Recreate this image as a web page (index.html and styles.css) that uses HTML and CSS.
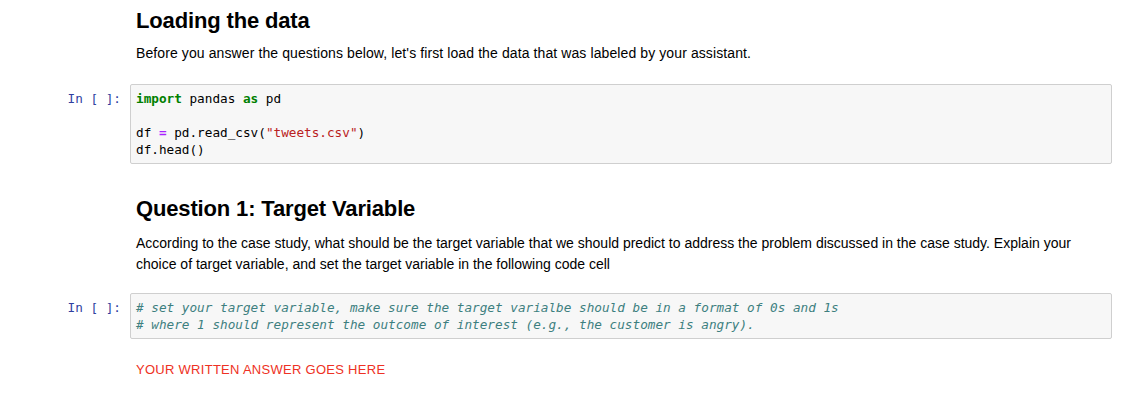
FILE: index.html
```html
<!DOCTYPE html>
<html>
<head>
<meta charset="utf-8">
<link rel="stylesheet" href="styles.css">
</head>
<body>
<div class="notebook">
  <div class="cell md-cell first">
    <div class="prompt"></div>
    <div class="md">
      <h2 class="h h-l">Loading the data</h2>
      <p class="para p1">Before you answer the questions below, let's first load the data that was labeled by your assistant.</p>
    </div>
  </div>

  <div class="cell code-cell c1">
    <div class="prompt in">In&nbsp;[&nbsp;]:</div>
    <div class="input"><pre class="code"><span class="kw">import</span> pandas <span class="kw">as</span> pd

df <span class="op">=</span> pd.read_csv(<span class="str">"tweets.csv"</span>)
df.head()</pre></div>
  </div>

  <div class="cell md-cell">
    <div class="prompt"></div>
    <div class="md">
      <h2 class="h h-q">Question 1: Target Variable</h2>
      <p class="para p2">According to the case study, what should be the target variable that we should predict to address the problem discussed in the case study. Explain your choice of target variable, and set the target variable in the following code cell</p>
    </div>
  </div>

  <div class="cell code-cell c2">
    <div class="prompt in">In&nbsp;[&nbsp;]:</div>
    <div class="input"><pre class="code"><span class="cm"># set your target variable, make sure the target varialbe should be in a format of 0s and 1s</span>
<span class="cm"># where 1 should represent the outcome of interest (e.g., the customer is angry).</span></pre></div>
  </div>

  <div class="cell md-cell">
    <div class="prompt"></div>
    <div class="md">
      <p class="para answer">YOUR WRITTEN ANSWER GOES HERE</p>
    </div>
  </div>
</div>
</body>
</html>
```

FILE: styles.css
```css
html, body {
  margin: 0;
  padding: 0;
  background: #ffffff;
}
body {
  font-family: "Liberation Sans", Arial, Helvetica, sans-serif;
  color: #000;
}
.notebook {
  padding: 6px 20px 0 0;
  display: flex;
  flex-direction: column;
}
.cell {
  display: flex;
  flex-direction: row;
  align-items: flex-start;
}
.prompt {
  flex: 0 0 130px;
  width: 130px;
  box-sizing: border-box;
  text-align: right;
  padding-right: 9px;
}
.prompt.in {
  font-family: "DejaVu Sans Mono", monospace;
  font-size: 12.7px;
  line-height: 17px;
  color: #303F9F;
  padding-top: 6px;
}
.md {
  flex: 1 1 auto;
  min-width: 0;
  padding-left: 6px;
  padding-right: 10px;
}
.h {
  margin: 0;
  font-size: 22px;
  line-height: 28px;
  font-weight: bold;
  letter-spacing: -0.15px;
}
.h-l { padding-top: 1px; }
.para {
  margin: 0;
  font-size: 14px;
  line-height: 20px;
  letter-spacing: 0.1px;
}
.p1 { margin-top: 8px; }
.p2 { margin-top: 10px; line-height: 20.5px; letter-spacing: 0; }
.answer {
  color: #ee3124;
  font-size: 13px;
  letter-spacing: 0.28px;
}

.code-cell.c1 { margin-top: 21px; margin-bottom: 31px; }
.code-cell.c2 { margin-top: 19px; margin-bottom: 21px; }

.input {
  flex: 1 1 auto;
  min-width: 0;
  background: #f7f7f7;
  border: 1px solid #cfcfcf;
  border-radius: 2px;
  padding: 5px 5px;
}
.code {
  margin: 0;
  font-family: "DejaVu Sans Mono", monospace;
  font-size: 12.7px;
  line-height: 17px;
  color: #000;
  white-space: pre;
}
.kw { color: #008000; font-weight: bold; }
.op { color: #AA22FF; font-weight: bold; }
.str { color: #BA2121; }
.cm { color: #3d7f7f; font-style: italic; }
```
